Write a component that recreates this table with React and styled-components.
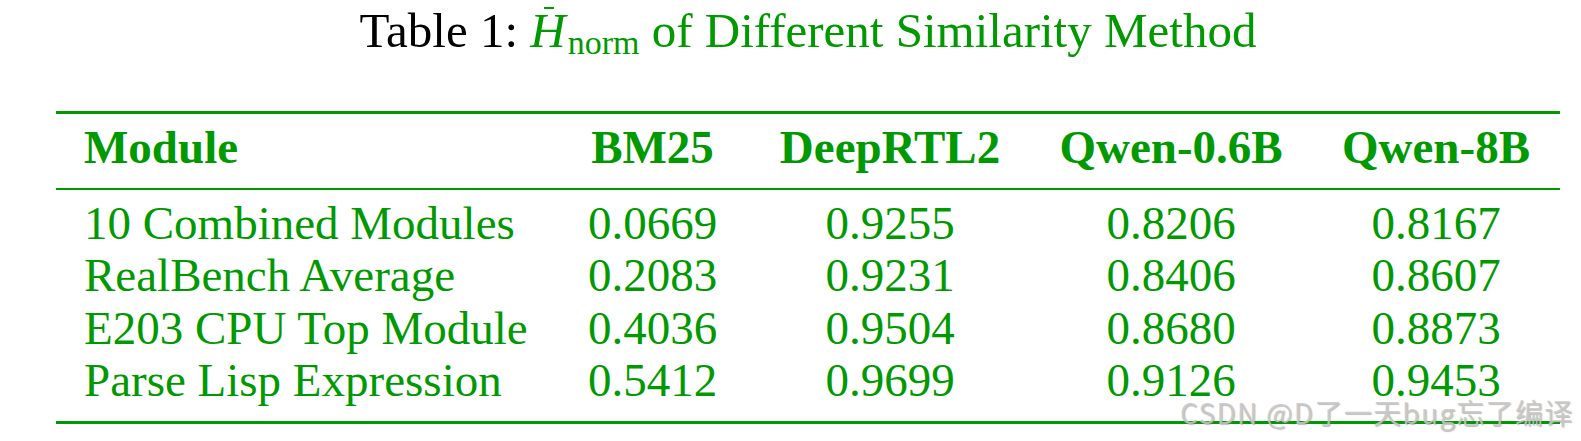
import React from "react";
import styled, { createGlobalStyle } from "styled-components";

const GREEN = "#009900";

const Global = createGlobalStyle`
  html, body { margin: 0; padding: 0; background: #ffffff; }
  body { font-family: "Liberation Serif", "Times New Roman", serif; }
`;

const Page = styled.div`
  position: relative;
  width: 1581px;
  height: 441px;
  overflow: hidden;
  background: #fff;
`;

const Frame = styled.div`
  margin-left: 56px;
  width: 1504px;
  padding-top: 5px;
`;

const Caption = styled.div`
  font-size: 49px;
  line-height: 52px;
  text-align: center;
  color: ${GREEN};
  white-space: nowrap;
  height: 106px;
`;

const Label = styled.span`
  color: #000;
`;

const Sym = styled.span`
  position: relative;
  font-style: italic;
  &::before {
    content: "";
    position: absolute;
    left: 14px;
    top: 4px;
    width: 10px;
    height: 2px;
    background: ${GREEN};
  }
`;

const Sub = styled.span`
  font-size: 34px;
  position: relative;
  top: 7px;
  margin-left: 2px;
`;

const Rule = styled.div`
  height: ${(p) => p.$w}px;
  background: ${GREEN};
`;

const Row = styled.div`
  display: grid;
  grid-template-columns: 499px 195px 280px 282px 248px;
  font-size: 47px;
  line-height: ${(p) => p.$lh || 52}px;
  color: ${GREEN};
  font-weight: ${(p) => (p.$head ? 700 : 400)};
  padding-top: ${(p) => p.$pt || 0}px;
  padding-bottom: ${(p) => p.$pb || 0}px;
  white-space: nowrap;
`;

const Name = styled.div`
  padding-left: 28px;
`;

const Num = styled.div`
  text-align: center;
`;

const Body = styled.div`
  padding-top: 7px;
  padding-bottom: 14px;
`;

const Watermark = styled.div`
  position: absolute;
  left: 1180px;
  top: 398px;
  font-family: "Noto Sans CJK SC", "Noto Sans", sans-serif;
  font-size: 28px;
  line-height: 28px;
  letter-spacing: 1.3px;
  color: rgba(200, 200, 200, 0.85);
  text-shadow: 1px 1px 1px rgba(110, 110, 110, 0.45);
  white-space: nowrap;
`;

const headers = ["BM25", "DeepRTL2", "Qwen-0.6B", "Qwen-8B"];
const rows = [
  ["10 Combined Modules", "0.0669", "0.9255", "0.8206", "0.8167"],
  ["RealBench Average", "0.2083", "0.9231", "0.8406", "0.8607"],
  ["E203 CPU Top Module", "0.4036", "0.9504", "0.8680", "0.8873"],
  ["Parse Lisp Expression", "0.5412", "0.9699", "0.9126", "0.9453"],
];

export default function App() {
  return (
    <Page>
      <Global />
      <Frame>
        <Caption>
          <Label>Table 1: </Label>
          <Sym>H</Sym>
          <Sub>norm</Sub> of Different Similarity Method
        </Caption>
        <Rule $w={3} />
        <Row $head $pt={7} $pb={15}>
          <Name>Module</Name>
          {headers.map((h) => (
            <Num key={h}>{h}</Num>
          ))}
        </Row>
        <Rule $w={2} />
        <Body>
          {rows.map((r) => (
            <Row key={r[0]} $lh={52.4}>
              <Name>{r[0]}</Name>
              {r.slice(1).map((v, i) => (
                <Num key={i}>{v}</Num>
              ))}
            </Row>
          ))}
        </Body>
        <Rule $w={3} />
      </Frame>
      <Watermark>CSDN @D了一天bug忘了编译</Watermark>
    </Page>
  );
}
